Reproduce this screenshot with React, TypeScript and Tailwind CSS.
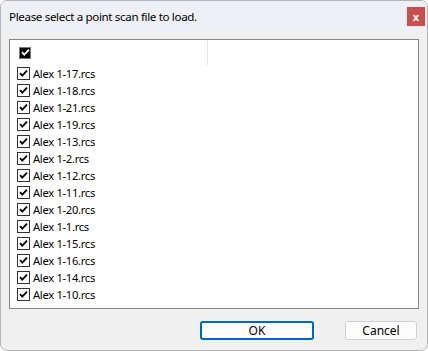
import React from 'react';

const files = [
  'Alex 1-17.rcs',
  'Alex 1-18.rcs',
  'Alex 1-21.rcs',
  'Alex 1-19.rcs',
  'Alex 1-13.rcs',
  'Alex 1-2.rcs',
  'Alex 1-12.rcs',
  'Alex 1-11.rcs',
  'Alex 1-20.rcs',
  'Alex 1-1.rcs',
  'Alex 1-15.rcs',
  'Alex 1-16.rcs',
  'Alex 1-14.rcs',
  'Alex 1-10.rcs',
];

function Check({ dark = false }: { dark?: boolean }) {
  return (
    <span
      className={
        dark
          ? 'flex h-[12px] w-[12px] items-center justify-center border border-[#7a7a7a] bg-black'
          : 'flex h-[13px] w-[13px] items-center justify-center border border-[#333333] bg-white'
      }
    >
      <svg width="9" height="9" viewBox="0 0 9 9">
        <path d="M1 4.2 L3.3 6.6 L8 1.6" fill="none" stroke={dark ? '#ffffff' : '#000000'} strokeWidth="1.8" />
      </svg>
    </span>
  );
}

export default function App() {
  return (
    <div className="h-[351px] w-[428px] overflow-hidden rounded-[7px] border border-[#b4b4b4] bg-[#f0f0f0] font-['Segoe_UI','Noto_Sans',sans-serif] text-[12px] text-black">
      <div className="flex h-[31px] items-center justify-between bg-[#eff0f6] pl-[8px] pr-[2px]">
        <span className="text-[11.6px] leading-none tracking-[-0.35px]">Please select a point scan file to load.</span>
        <span className="flex h-[19px] w-[18px] items-center justify-center bg-[#c94f4f] text-[11px] font-bold leading-none text-white">
          x
        </span>
      </div>
      <div className="px-[8px] pt-[7px]">
        <div className="h-[270px] border border-[#828790] bg-white">
          <div className="flex h-[25px]">
            <div className="flex w-[198px] items-center border-r border-[#e5e5e5] pl-[9px]">
              <Check dark />
            </div>
          </div>
          <div className="flex flex-col">
            {files.map((f) => (
              <div key={f} className="flex h-[17px] items-center gap-[3px] pl-[7px]">
                <Check />
                <span className="text-[11.2px] leading-none tracking-[-0.3px]">{f}</span>
              </div>
            ))}
          </div>
        </div>
      </div>
      <div className="flex justify-end gap-[31px] pr-[10px] pt-[12px]">
        <button className="h-[19px] w-[114px] rounded-[3px] border-2 border-[#0067c0] bg-[#fdfdfd] text-[12px] leading-none">
          OK
        </button>
        <button className="h-[19px] w-[72px] rounded-[3px] border border-[#d0d0d0] bg-[#fdfdfd] text-[12px] leading-none">
          Cancel
        </button>
      </div>
    </div>
  );
}
